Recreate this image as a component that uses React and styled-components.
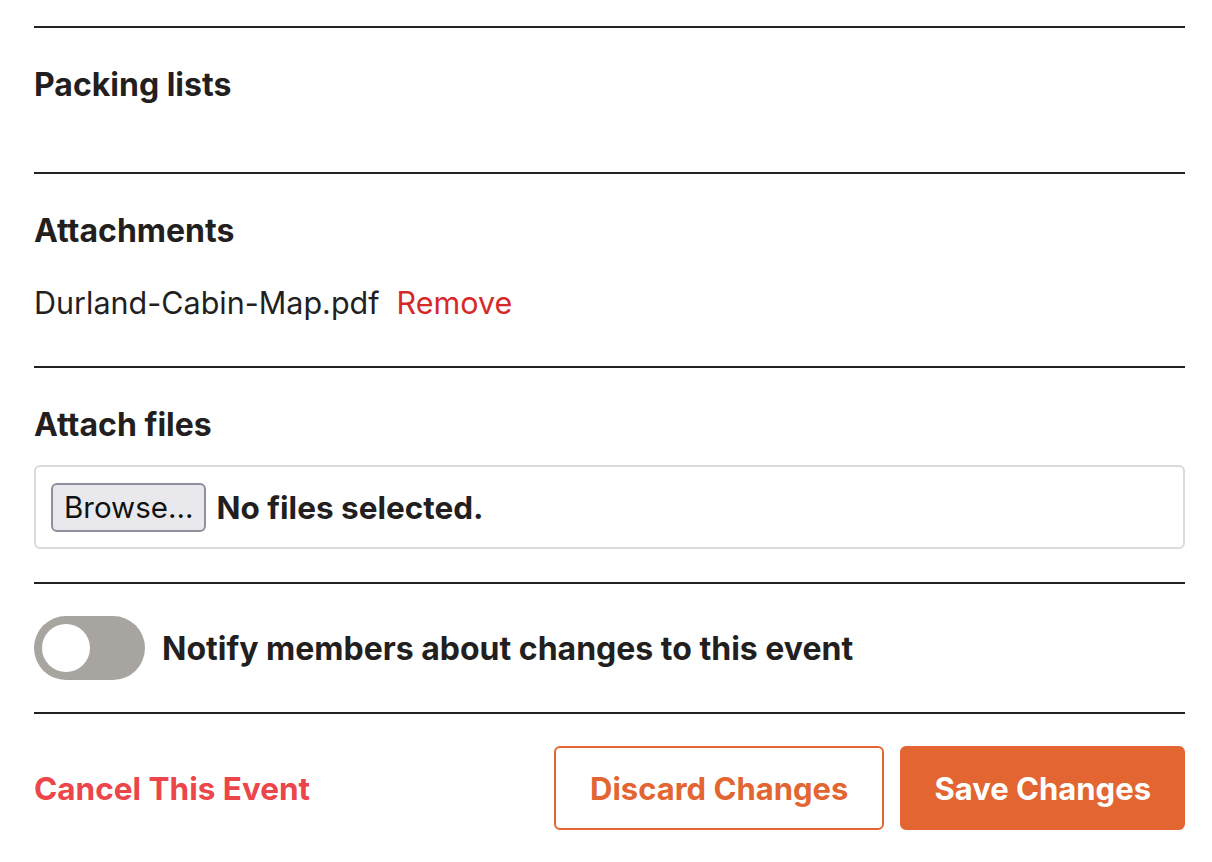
import React from 'react';
import styled, { createGlobalStyle } from 'styled-components';

const GlobalStyle = createGlobalStyle`
  body {
    margin: 0;
    background: #fff;
    font-family: Inter, "Noto Sans", sans-serif;
    color: #231f1e;
  }
`;

const Page = styled.div`
  padding: 26px 27px 0 34px;
`;

const Section = styled.section`
  border-top: 2px solid #222;
  padding: ${(p) => p.$pad || '36px 0 33px'};
  display: flex;
  flex-direction: column;
`;

const Heading = styled.h2`
  margin: 0;
  font-size: 32px;
  line-height: 42px;
  font-weight: 700;
`;

const EmptyList = styled.div`
  height: 33px;
`;

const FileRow = styled.div`
  margin-top: 19px;
  height: 62px;
  display: flex;
  align-items: center;
  gap: 17px;
  font-size: 30.5px;
`;

const RemoveLink = styled.a`
  color: #d62a2a;
  cursor: pointer;
`;

const FileBox = styled.div`
  margin-top: 19px;
  height: 84px;
  box-sizing: border-box;
  border: 2px solid #dcd9d6;
  border-radius: 6px;
  padding: 0 15px;
  display: flex;
  align-items: center;
  gap: 10px;
`;

const BrowseButton = styled.button`
  height: 49px;
  padding: 0 11px;
  background: #e9e9ed;
  border: 2px solid #8f8f9d;
  border-radius: 6px;
  font-family: inherit;
  font-size: 29.5px;
  color: #111;
`;

const NoFiles = styled.span`
  font-size: 31.5px;
  font-weight: 700;
`;

const ToggleRow = styled.label`
  display: flex;
  align-items: center;
  gap: 17px;
  font-size: 32px;
  font-weight: 700;
`;

const Switch = styled.span`
  width: 111px;
  height: 64px;
  border-radius: 32px;
  background: #a8a4a0;
  display: flex;
  align-items: center;
  padding-left: 8px;
  box-sizing: border-box;
  flex-shrink: 0;
`;

const Knob = styled.span`
  width: 48px;
  height: 48px;
  border-radius: 50%;
  background: #fff;
`;

const Footer = styled.div`
  display: flex;
  align-items: center;
  gap: 16px;
`;

const CancelLink = styled.a`
  margin-right: auto;
  color: #ec464b;
  font-size: 31.5px;
  font-weight: 700;
  cursor: pointer;
`;

const ActionButton = styled.button`
  height: 84px;
  padding: 0 ${(p) => (p.$primary ? '32px' : '34px')};
  border-radius: 6px;
  border: 2px solid #e36532;
  background: ${(p) => (p.$primary ? '#e36532' : '#fff')};
  color: ${(p) => (p.$primary ? '#fff' : '#e36532')};
  font-family: inherit;
  font-size: 31px;
  font-weight: 700;
  cursor: pointer;
`;

export default function App() {
  return (
    <>
      <GlobalStyle />
      <Page>
        <Section>
          <Heading>Packing lists</Heading>
          <EmptyList />
        </Section>
        <Section>
          <Heading>Attachments</Heading>
          <FileRow>
            <span>Durland-Cabin-Map.pdf</span>
            <RemoveLink>Remove</RemoveLink>
          </FileRow>
        </Section>
        <Section>
          <Heading>Attach files</Heading>
          <FileBox>
            <BrowseButton>Browse...</BrowseButton>
            <NoFiles>No files selected.</NoFiles>
          </FileBox>
        </Section>
        <Section $pad="32px 0 32px">
          <ToggleRow>
            <Switch>
              <Knob />
            </Switch>
            Notify members about changes to this event
          </ToggleRow>
        </Section>
        <Section $pad="32px 0 32px">
          <Footer>
            <CancelLink>Cancel This Event</CancelLink>
            <ActionButton>Discard Changes</ActionButton>
            <ActionButton $primary>Save Changes</ActionButton>
          </Footer>
        </Section>
      </Page>
    </>
  );
}
